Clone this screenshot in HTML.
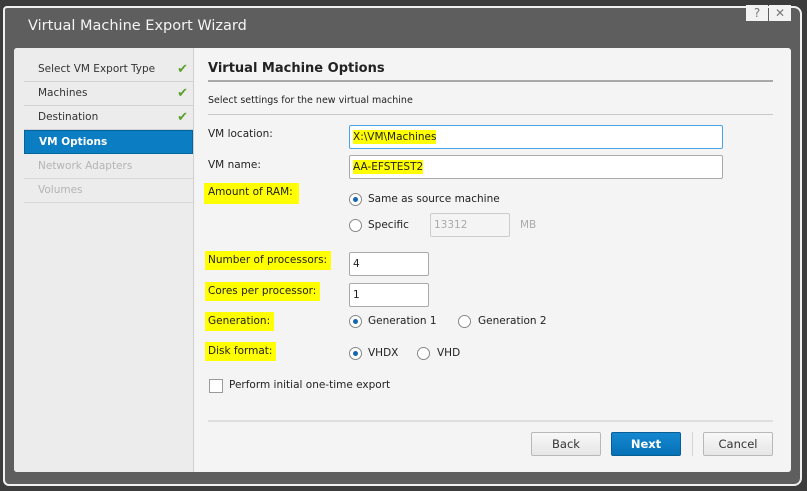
<!DOCTYPE html>
<html><head><style>
*{box-sizing:border-box;margin:0;padding:0}
body{width:807px;height:491px;background:#3c3c3c;font-family:"DejaVu Sans","Liberation Sans",sans-serif;position:relative;overflow:hidden;font-size:10.5px;color:#222}
.dlg{position:absolute;left:3px;top:6px;width:799px;height:480px;background:#5e5e5e;border:2px solid #f0f0f0;border-radius:4px 8px 8px 6px}
.title{position:absolute;left:28px;top:18px;color:#f4f4f4;font-size:14.5px}
.hb{position:absolute;top:5px;width:22px;height:16px;background:#f2f2f2;color:#777;text-align:center;font-size:12px;line-height:16px}
.panel{position:absolute;left:14px;top:48px;width:777px;height:424px;background:#f4f4f4;border-radius:3px}
.nav{position:absolute;left:0;top:0;width:180px;height:424px;background:#ececec;border-right:1px solid #cfcfcf;border-radius:3px 0 0 3px}
.ni{position:absolute;left:10px;width:169px;height:24px;line-height:23px;padding-left:14px;font-size:10.5px;color:#333;border-bottom:1px solid #d2d2d2}
.ni .ck{position:absolute;right:5px;top:0;color:#5aa02c;font-size:13px}
.sel{background:#0b7dc2;color:#fff;font-weight:bold;border:1px solid #07639c;left:10px}
.dis{color:#b4b4b4;border-bottom:1px solid #d8d8d8}
.a{position:absolute}
.hl{background:#ffff00;padding:1px 2px}
.inp{position:absolute;background:#fff;border:1px solid #aaa;height:24px;line-height:22px;padding-left:3px;font-size:10.5px;border-radius:2px}
.rad{position:absolute;width:13px;height:13px;border:1px solid #888;border-radius:50%;background:#fff}
.rad.on::after{content:"";position:absolute;left:3px;top:3px;width:5px;height:5px;border-radius:50%;background:#1566b0}
.btn{position:absolute;top:432px;width:70px;height:24px;border:1px solid #b8b8b8;border-radius:2px;background:linear-gradient(#f8f8f8,#e6e6e6);text-align:center;line-height:22px;color:#333;font-size:11.5px}
</style></head><body>
<div class="dlg"></div>
<div class="title">Virtual Machine Export Wizard</div>
<div class="hb" style="left:746px">?</div>
<div class="hb" style="left:769px">✕</div>
<div class="panel">
 <div class="nav"></div>
 <div class="ni" style="top:10px">Select VM Export Type<span class="ck">✔</span></div>
 <div class="ni" style="top:34px">Machines<span class="ck">✔</span></div>
 <div class="ni" style="top:58px">Destination<span class="ck">✔</span></div>
 <div class="ni sel" style="top:82px">VM Options</div>
 <div class="ni dis" style="top:107px">Network Adapters</div>
 <div class="ni dis" style="top:131px">Volumes</div>
</div>
<div class="a" style="left:208px;top:61px;font-weight:bold;font-size:13px;color:#222">Virtual Machine Options</div>
<div class="a" style="left:208px;top:80px;width:565px;height:2px;background:#a8a8a8"></div>
<div class="a" style="left:208px;top:95px;font-size:9.5px">Select settings for the new virtual machine</div>
<div class="a" style="left:208px;top:114px;width:565px;height:1px;background:#c8c8c8"></div>
<div class="a" style="left:208px;top:128px">VM location:</div>
<div class="inp" style="left:349px;top:125px;width:374px;border-color:#4aa3e8"><span class="hl" style="padding:1px 0">X:\VM\Machines</span></div>
<div class="a" style="left:208px;top:159px">VM name:</div>
<div class="inp" style="left:349px;top:155px;width:374px"><span class="hl" style="padding:1px 0">AA-EFSTEST2</span></div>
<div class="a hl" style="left:204px;top:183px;padding:3px 6px 6px 4px">Amount of RAM:</div>
<div class="rad on" style="left:349px;top:193px"></div><div class="a" style="left:368px;top:193px">Same as source machine</div>
<div class="rad" style="left:349px;top:219px"></div><div class="a" style="left:368px;top:219px">Specific</div>
<div class="inp" style="left:430px;top:213px;width:80px;color:#aaa;border-color:#ccc;background:#f4f4f4">13312</div>
<div class="a" style="left:520px;top:219px;color:#aaa">MB</div>
<div class="a hl" style="left:205px;top:251px;padding:3px 4px 4px 3px">Number of processors:</div>
<div class="inp" style="left:349px;top:252px;width:80px">4</div>
<div class="a hl" style="left:205px;top:282px;padding:3px 4px 4px 3px">Cores per processor:</div>
<div class="inp" style="left:349px;top:283px;width:80px">1</div>
<div class="a hl" style="left:205px;top:312px;padding:3px 4px 4px 3px">Generation:</div>
<div class="rad on" style="left:349px;top:315px"></div><div class="a" style="left:368px;top:315px">Generation 1</div>
<div class="rad" style="left:458px;top:315px"></div><div class="a" style="left:478px;top:315px">Generation 2</div>
<div class="a hl" style="left:205px;top:342px;padding:3px 4px 4px 3px">Disk format:</div>
<div class="rad on" style="left:349px;top:347px"></div><div class="a" style="left:368px;top:347px">VHDX</div>
<div class="rad" style="left:417px;top:347px"></div><div class="a" style="left:437px;top:347px">VHD</div>
<div class="a" style="left:209px;top:379px;width:14px;height:14px;border:1px solid #999;background:#fff"></div>
<div class="a" style="left:229px;top:379px">Perform initial one-time export</div>
<div class="a" style="left:208px;top:420px;width:565px;height:2px;background:#dedede"></div>
<div class="btn" style="left:531px">Back</div>
<div class="btn" style="left:611px;background:linear-gradient(#1487d0,#0672b6);border-color:#075d94;color:#fff;font-weight:bold">Next</div>
<div class="a" style="left:692px;top:432px;width:1px;height:24px;background:#d4d4d4"></div>
<div class="btn" style="left:703px">Cancel</div>
</body></html>
